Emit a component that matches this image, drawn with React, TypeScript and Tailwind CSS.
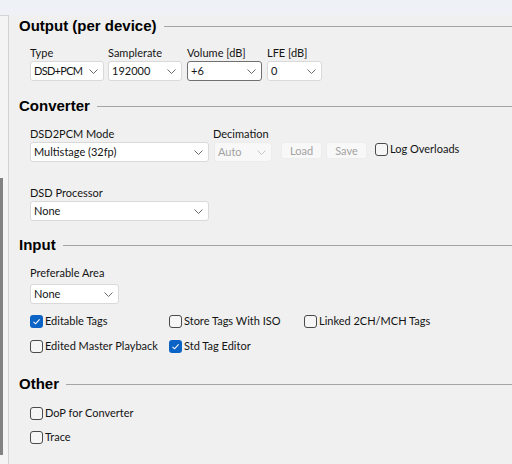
import React from "react";

function Chevron({ light }: { light?: boolean }) {
  return (
    <svg width="9" height="5" viewBox="0 0 9 5" className="shrink-0">
      <path d="M0.5 0.5 L4.5 4.5 L8.5 0.5" fill="none" stroke={light ? "#c4c4c4" : "#6a6a6a"} strokeWidth="1" />
    </svg>
  );
}

function Select({ value, className, textClass }: { value: string; className: string; textClass?: string }) {
  return (
    <div className={"h-[20px] flex items-center justify-between pl-[3px] pr-[5px] rounded-[3px] border " + className}>
      <span className={"whitespace-nowrap " + (textClass ?? "")}>{value}</span>
      <Chevron />
    </div>
  );
}

function DisabledSelect({ value, className }: { value: string; className: string }) {
  return (
    <div className={"h-[20px] flex items-center justify-between pl-[3px] pr-[5px] rounded-[3px] border border-[#ececec] bg-[#f8f8f8] text-[#a2a2a2] " + className}>
      <span className="whitespace-nowrap">{value}</span>
      <Chevron light />
    </div>
  );
}

function Check({ label, checked }: { label: string; checked?: boolean }) {
  return (
    <div className="flex items-center gap-[2px] h-[16px] whitespace-nowrap">
      {checked ? (
        <div className="w-[13px] h-[13px] rounded-[3px] bg-[#0b63c5] flex items-center justify-center shrink-0">
          <svg width="13" height="13" viewBox="0 0 13 13">
            <path d="M3.5 6.8 L5.6 8.8 L9.6 4.4" fill="none" stroke="#ffffff" strokeWidth="1.1" />
          </svg>
        </div>
      ) : (
        <div className="w-[13px] h-[13px] rounded-[3px] border border-[#4a4a4a] bg-[#f6f6f6] shrink-0" />
      )}
      <span>{label}</span>
    </div>
  );
}

function Heading({ title, className }: { title: string; className: string }) {
  return (
    <div className={"flex items-center h-[18px] " + className}>
      <span className="font-['Liberation_Sans',Arial,sans-serif] font-bold text-[15px] leading-[18px] text-black whitespace-nowrap">
        {title}
      </span>
      <div className="flex-1 h-px bg-[#a5a5a5] ml-[7px]" />
    </div>
  );
}

function Label({ text }: { text: string }) {
  return <div className="h-[15px] leading-[15px] whitespace-nowrap">{text}</div>;
}

export default function App() {
  return (
    <div className="w-[512px] h-[464px] bg-[#f0f0f0] flex flex-col overflow-hidden font-['Lato',sans-serif] text-[11px] leading-[14px] text-[#141414]">
      <div className="h-[15px] bg-[#eef2f6] shrink-0" />
      <div className="flex flex-1">
        <div className="w-[9px] shrink-0 border-t border-r border-[#d3d3d3] bg-[#f4f4f4] flex flex-col">
          <div className="mt-[162px] w-[3px] h-[277px] bg-[#828282]" />
        </div>
        <div className="flex-1 pl-[10px] flex flex-col">
          <Heading title="Output (per device)" className="mt-[2px]" />
          <div className="flex mt-[10px] pl-[11px]">
            <div className="flex flex-col w-[74px]">
              <Label text="Type" />
              <Select value="DSD+PCM" textClass="tracking-[-0.7px]" className="mt-[1px] bg-white border-[#d9d9d9]" />
            </div>
            <div className="flex flex-col w-[74px] ml-[4px]">
              <Label text="Samplerate" />
              <Select value="192000" className="mt-[1px] bg-white border-[#d9d9d9]" />
            </div>
            <div className="flex flex-col w-[75px] ml-[5px]">
              <Label text="Volume [dB]" />
              <Select value="+6" className="mt-[1px] bg-white border-[#707070]" />
            </div>
            <div className="flex flex-col w-[55px] ml-[5px]">
              <Label text="LFE [dB]" />
              <Select value="0" className="mt-[1px] bg-white border-[#d9d9d9]" />
            </div>
          </div>

          <Heading title="Converter" className="mt-[16px]" />
          <div className="flex items-start mt-[11px] pl-[11px]">
            <div className="flex flex-col w-[179px]">
              <Label text="DSD2PCM Mode" />
              <Select value="Multistage (32fp)" className="mt-[1px] bg-white border-[#d9d9d9]" />
            </div>
            <div className="flex flex-col w-[58px] ml-[5px]">
              <div className="-ml-[1px]">
                <Label text="Decimation" />
              </div>
              <DisabledSelect value="Auto" className="mt-[1px]" />
            </div>
            <div className="mt-[16px] ml-[9px] w-[41px] h-[17px] rounded-[3px] bg-[#f8f8f8] border border-[#ededed] text-[#a2a2a2] flex items-center justify-center">
              Load
            </div>
            <div className="mt-[16px] ml-[4px] w-[41px] h-[17px] rounded-[3px] bg-[#f8f8f8] border border-[#ededed] text-[#a2a2a2] flex items-center justify-center">
              Save
            </div>
            <div className="mt-[15px] ml-[8px]">
              <Check label="Log Overloads" />
            </div>
          </div>
          <div className="flex flex-col w-[179px] mt-[23px] ml-[11px]">
            <Label text="DSD Processor" />
            <Select value="None" className="mt-[1px] bg-white border-[#d9d9d9]" />
          </div>

          <Heading title="Input" className="mt-[15px]" />
          <div className="flex flex-col w-[89px] mt-[11px] ml-[11px]">
            <Label text="Preferable Area" />
            <Select value="None" className="mt-[4px] bg-white border-[#d9d9d9]" />
          </div>
          <div className="grid grid-cols-[139px_135px_auto] gap-y-[9px] mt-[9px] pl-[11px]">
            <Check label="Editable Tags" checked />
            <Check label="Store Tags With ISO" />
            <Check label="Linked 2CH/MCH Tags" />
            <Check label="Edited Master Playback" />
            <Check label="Std Tag Editor" checked />
          </div>

          <Heading title="Other" className="mt-[21px]" />
          <div className="flex flex-col gap-y-[8px] mt-[12px] pl-[11px]">
            <Check label="DoP for Converter" />
            <Check label="Trace" />
          </div>
        </div>
      </div>
    </div>
  );
}
